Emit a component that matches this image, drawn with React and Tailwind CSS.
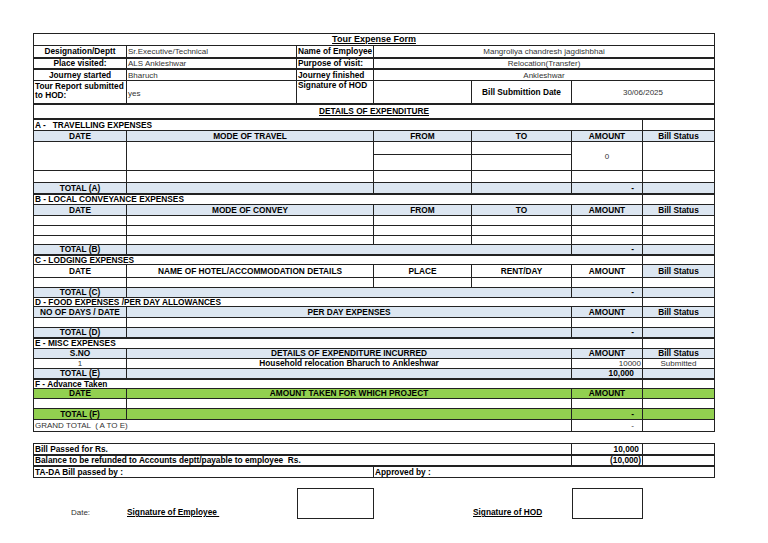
import clsx from 'clsx'

const COLS = 'grid grid-cols-[93px_170px_77px_98px_100px_71px_72px]'
const SPAN = {
  1: 'col-span-1',
  2: 'col-span-2',
  3: 'col-span-3',
  4: 'col-span-4',
  5: 'col-span-5',
  6: 'col-span-6',
  7: 'col-span-7',
}
const BLUE = 'bg-[#dce6f1]'
const GREEN = 'bg-[#92d050]'

// one spreadsheet row; thick adds the doubled bottom rule
function Row({ h, thick, className, children }) {
  return <div className={clsx(COLS, h, thick && 'border-b border-[#222]', className)}>{children}</div>
}

function C({ s = 1, a = 'center', bg, bold, wrap, className, children }) {
  return (
    <div
      className={clsx(
        SPAN[s],
        'flex overflow-hidden border-r border-b border-[#222] px-px',
        wrap ? 'items-start' : 'items-center whitespace-nowrap',
        a === 'center' && 'justify-center',
        a === 'right' && 'justify-end',
        bold ? 'text-[8.3px] font-bold text-black' : 'text-[#333]',
        bg,
        className
      )}
    >
      {children}
    </div>
  )
}

function Title({ h = 'h-[10px]', children }) {
  return (
    <Row h={h}>
      <C s={6} a="left" bold className="whitespace-pre">{children}</C>
      <C />
    </Row>
  )
}

function Total({ label, amount = '-', bg = BLUE, h, thick, split }) {
  return (
    <Row h={h} thick={thick}>
      <C bold bg={bg}>{label}</C>
      {split ? (
        <>
          <C s={2} bg={bg} />
          <C bg={bg} />
          <C bg={bg} />
        </>
      ) : (
        <C s={4} bg={bg} />
      )}
      <C a="right" bold bg={bg} className="pr-[8px]">{amount}</C>
      <C bg={bg} />
    </Row>
  )
}

function Blank({ h, thick }) {
  return (
    <Row h={h} thick={thick}>
      <C />
      <C s={2} />
      <C />
      <C />
      <C />
      <C />
    </Row>
  )
}

export default function App() {
  return (
    <div className="h-[543px] w-[768px] overflow-hidden bg-white pl-[33px] pt-[33px] font-['Liberation_Sans',Arial,sans-serif] text-[8px] leading-[9px] text-black">
      <div className="w-[682px] border-l border-t border-[#222]">
        <Row h="h-[12px]">
          <C s={7} bold className="!text-[9px] underline">Tour Expense Form</C>
        </Row>
        <Row h="h-[13px]" thick>
          <C bold>Designation/Deptt</C>
          <C a="left">Sr.Executive/Technical</C>
          <C a="left" bold>Name of Employee</C>
          <C s={4}>Mangroliya chandresh jagdishbhai</C>
        </Row>
        <Row h="h-[11px]" thick>
          <C bold>Place visited:</C>
          <C a="left">ALS Ankleshwar</C>
          <C a="left" bold>Purpose of visit:</C>
          <C s={4}>Relocation(Transfer)</C>
        </Row>
        <Row h="h-[11px]">
          <C bold>Journey started</C>
          <C a="left">Bharuch</C>
          <C a="left" bold>Journey finished</C>
          <C s={4}>Ankleshwar</C>
        </Row>
        <Row h="h-[24px]" thick>
          <C a="left" bold wrap className="pt-px">Tour Report submitted to HOD:</C>
          <C a="left" className="pt-[2px]">yes</C>
          <C a="left" bold className="items-start">Signature of HOD</C>
          <C />
          <C bold>Bill Submittion Date</C>
          <C s={2}>30/06/2025</C>
        </Row>
        <Row h="h-[15px]" thick>
          <C s={7} bold className="underline">DETAILS OF EXPENDITURE</C>
        </Row>

        {/* A */}
        <Title h="h-[11px]">{'A -   TRAVELLING EXPENSES'}</Title>
        <Row h="h-[11px]">
          <C bold bg={BLUE}>DATE</C>
          <C s={2} bold bg={BLUE}>MODE OF TRAVEL</C>
          <C bold bg={BLUE}>FROM</C>
          <C bold bg={BLUE}>TO</C>
          <C bold bg={BLUE}>AMOUNT</C>
          <C bold bg={BLUE}>Bill Status</C>
        </Row>
        <div className={clsx(COLS, 'grid-rows-[13px_16px]')}>
          <C className="row-span-2" />
          <C s={2} className="row-span-2" />
          <C />
          <C />
          <C className="row-span-2">0</C>
          <C className="row-span-2" />
          <C />
          <C />
        </div>
        <Blank h="h-[12px]" />
        <Total label="TOTAL (A)" h="h-[12px]" thick split />

        {/* B */}
        <Title>B - LOCAL CONVEYANCE EXPENSES</Title>
        <Row h="h-[11px]">
          <C bold bg={BLUE}>DATE</C>
          <C s={2} bold bg={BLUE}>MODE OF CONVEY</C>
          <C bold bg={BLUE}>FROM</C>
          <C bold bg={BLUE}>TO</C>
          <C bold bg={BLUE}>AMOUNT</C>
          <C bold bg={BLUE}>Bill Status</C>
        </Row>
        <Blank h="h-[10px]" />
        <Blank h="h-[10px]" />
        <Blank h="h-[9px]" />
        <Total label="TOTAL (B)" h="h-[11px]" thick />

        {/* C */}
        <Title h="h-[9px]">C - LODGING EXPENSES</Title>
        <Row h="h-[13px]">
          <C bold>DATE</C>
          <C s={2} bold>NAME OF HOTEL/ACCOMMODATION DETAILS</C>
          <C bold>PLACE</C>
          <C bold>RENT/DAY</C>
          <C bold>AMOUNT</C>
          <C bold bg={BLUE}>Bill Status</C>
        </Row>
        <Blank h="h-[10px]" />
        <Total label="TOTAL (C)" h="h-[10px]" />

        {/* D */}
        <Title h="h-[9px]">D - FOOD EXPENSES /PER DAY ALLOWANCES</Title>
        <Row h="h-[11px]">
          <C bold bg={BLUE}>NO OF DAYS / DATE</C>
          <C s={4} bold bg={BLUE}>PER DAY EXPENSES</C>
          <C bold bg={BLUE}>AMOUNT</C>
          <C bold bg={BLUE}>Bill Status</C>
        </Row>
        <Row h="h-[10px]">
          <C />
          <C s={4} />
          <C />
          <C />
        </Row>
        <Total label="TOTAL (D)" h="h-[11px]" thick />

        {/* E */}
        <Title>E - MISC EXPENSES</Title>
        <Row h="h-[10px]">
          <C bold bg={BLUE}>S.NO</C>
          <C s={4} bold bg={BLUE}>DETAILS OF EXPENDITURE INCURRED</C>
          <C bold bg={BLUE}>AMOUNT</C>
          <C bold bg={BLUE}>Bill Status</C>
        </Row>
        <Row h="h-[10px]">
          <C>1</C>
          <C s={4} bold>Household relocation Bharuch to Ankleshwar</C>
          <C a="right">10000</C>
          <C>Submitted</C>
        </Row>
        <Total label="TOTAL (E)" amount="10,000" h="h-[11px]" thick />

        {/* F */}
        <Title h="h-[9px]">F - Advance Taken</Title>
        <Row h="h-[10px]">
          <C bold bg={GREEN}>DATE</C>
          <C s={4} bold bg={GREEN}>AMOUNT TAKEN FOR WHICH PROJECT</C>
          <C bold bg={GREEN}>AMOUNT</C>
          <C bg={GREEN} />
        </Row>
        <Row h="h-[10px]">
          <C />
          <C s={4} />
          <C />
          <C />
        </Row>
        <Total label="TOTAL (F)" h="h-[11px]" bg={GREEN} />
        <Row h="h-[12px]">
          <C s={5} a="left" className="whitespace-pre">{'GRAND TOTAL  ( A TO E)'}</C>
          <C a="right" className="pr-[8px]">-</C>
          <C />
        </Row>
      </div>

      <div className="mt-[11px] w-[682px] border-l border-t border-[#222]">
        <Row h="h-[12px]" thick>
          <C s={5} a="left" bold>Bill Passed for Rs.</C>
          <C a="right" bold className="pr-[3px]">10,000</C>
          <C />
        </Row>
        <Row h="h-[11px]" thick>
          <C s={5} a="left" bold className="whitespace-pre">{'Balance to be refunded to Accounts deptt/payable to employee  Rs.'}</C>
          <C a="right" bold>(10,000)</C>
          <C />
        </Row>
        <Row h="h-[11px]">
          <C s={3} a="left" bold>TA-DA Bill passed by :</C>
          <C s={4} a="left" bold>Approved by :</C>
        </Row>
      </div>

      <div className={clsx(COLS, 'mt-[10px] h-[31px] w-[682px] pl-px')}>
        <div className="flex items-end justify-center pb-[2px] text-[#333]">Date:</div>
        <div className="flex items-end whitespace-pre pb-[2px] text-[8.3px] font-bold underline">{'Signature of Employee '}</div>
        <div className="border border-[#222]" />
        <div />
        <div className="flex items-end pb-[2px] pl-px text-[8.3px] font-bold underline">Signature of HOD</div>
        <div className="border border-[#222]" />
        <div />
      </div>
    </div>
  )
}
